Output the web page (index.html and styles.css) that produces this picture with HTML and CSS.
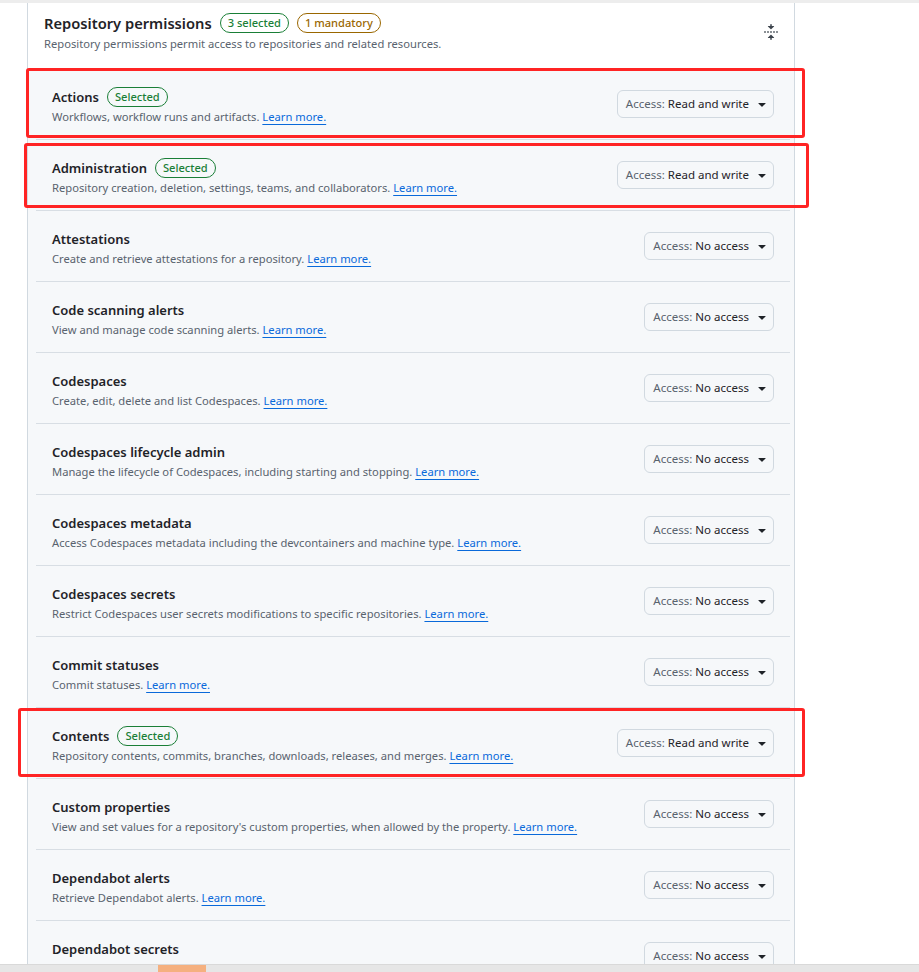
FILE: index.html
```html
<!DOCTYPE html>
<html lang="en">
<head>
<meta charset="utf-8">
<title>Repository permissions</title>
<link rel="stylesheet" href="styles.css">
</head>
<body>
<div class="topstrip"></div>
<div class="panel">
  <div class="panel-header">
    <div class="header-text">
      <div class="header-title">
        <h2>Repository permissions</h2>
        <span class="pill pill-green">3 selected</span>
        <span class="pill pill-gold">1 mandatory</span>
      </div>
      <p class="muted">Repository permissions permit access to repositories and related resources.</p>
    </div>
    <button class="icon-btn" aria-label="Collapse">
      <svg width="16" height="16" viewBox="0 0 16 16" fill="currentColor"><path d="M10.896 2H8.75V.75a.75.75 0 0 0-1.5 0V2H5.104a.25.25 0 0 0-.177.427l2.896 2.896a.25.25 0 0 0 .354 0l2.896-2.896A.25.25 0 0 0 10.896 2ZM8.75 15.25a.75.75 0 0 1-1.5 0V14H5.104a.25.25 0 0 1-.177-.427l2.896-2.896a.25.25 0 0 1 .354 0l2.896 2.896a.25.25 0 0 1-.177.427H8.75v1.25Zm-6.5-6.5a.75.75 0 0 0 0-1.5h-.5a.75.75 0 0 0 0 1.5h.5ZM6 8a.75.75 0 0 1-.75.75h-.5a.75.75 0 0 1 0-1.5h.5A.75.75 0 0 1 6 8Zm2.25.75a.75.75 0 0 0 0-1.5h-.5a.75.75 0 0 0 0 1.5h.5ZM12 8a.75.75 0 0 1-.75.75h-.5a.75.75 0 0 1 0-1.5h.5A.75.75 0 0 1 12 8Zm2.25.75a.75.75 0 0 0 0-1.5h-.5a.75.75 0 0 0 0 1.5h.5Z"/></svg>
    </button>
  </div>

  <div class="perm-area">
    <ul class="perm-list">
      <li class="perm-row">
        <div class="perm-info">
          <div class="perm-title"><strong>Actions</strong><span class="pill pill-green">Selected</span></div>
          <p class="muted">Workflows, workflow runs and artifacts. <a href="#">Learn more.</a></p>
        </div>
        <button class="access-btn"><span class="access-label">Access:</span><span class="access-value">Read and write</span><svg class="caret" width="16" height="16" viewBox="0 0 16 16" fill="currentColor"><path d="m4.427 7.427 3.396 3.396a.25.25 0 0 0 .354 0l3.396-3.396A.25.25 0 0 0 11.396 7H4.604a.25.25 0 0 0-.177.427Z"/></svg></button>
      </li>
      <li class="perm-row">
        <div class="perm-info">
          <div class="perm-title"><strong>Administration</strong><span class="pill pill-green">Selected</span></div>
          <p class="muted">Repository creation, deletion, settings, teams, and collaborators. <a href="#">Learn more.</a></p>
        </div>
        <button class="access-btn"><span class="access-label">Access:</span><span class="access-value">Read and write</span><svg class="caret" width="16" height="16" viewBox="0 0 16 16" fill="currentColor"><path d="m4.427 7.427 3.396 3.396a.25.25 0 0 0 .354 0l3.396-3.396A.25.25 0 0 0 11.396 7H4.604a.25.25 0 0 0-.177.427Z"/></svg></button>
      </li>
      <li class="perm-row">
        <div class="perm-info">
          <div class="perm-title"><strong>Attestations</strong></div>
          <p class="muted">Create and retrieve attestations for a repository. <a href="#">Learn more.</a></p>
        </div>
        <button class="access-btn"><span class="access-label">Access:</span><span class="access-value">No access</span><svg class="caret" width="16" height="16" viewBox="0 0 16 16" fill="currentColor"><path d="m4.427 7.427 3.396 3.396a.25.25 0 0 0 .354 0l3.396-3.396A.25.25 0 0 0 11.396 7H4.604a.25.25 0 0 0-.177.427Z"/></svg></button>
      </li>
      <li class="perm-row">
        <div class="perm-info">
          <div class="perm-title"><strong>Code scanning alerts</strong></div>
          <p class="muted">View and manage code scanning alerts. <a href="#">Learn more.</a></p>
        </div>
        <button class="access-btn"><span class="access-label">Access:</span><span class="access-value">No access</span><svg class="caret" width="16" height="16" viewBox="0 0 16 16" fill="currentColor"><path d="m4.427 7.427 3.396 3.396a.25.25 0 0 0 .354 0l3.396-3.396A.25.25 0 0 0 11.396 7H4.604a.25.25 0 0 0-.177.427Z"/></svg></button>
      </li>
      <li class="perm-row">
        <div class="perm-info">
          <div class="perm-title"><strong>Codespaces</strong></div>
          <p class="muted">Create, edit, delete and list Codespaces. <a href="#">Learn more.</a></p>
        </div>
        <button class="access-btn"><span class="access-label">Access:</span><span class="access-value">No access</span><svg class="caret" width="16" height="16" viewBox="0 0 16 16" fill="currentColor"><path d="m4.427 7.427 3.396 3.396a.25.25 0 0 0 .354 0l3.396-3.396A.25.25 0 0 0 11.396 7H4.604a.25.25 0 0 0-.177.427Z"/></svg></button>
      </li>
      <li class="perm-row">
        <div class="perm-info">
          <div class="perm-title"><strong>Codespaces lifecycle admin</strong></div>
          <p class="muted">Manage the lifecycle of Codespaces, including starting and stopping. <a href="#">Learn more.</a></p>
        </div>
        <button class="access-btn"><span class="access-label">Access:</span><span class="access-value">No access</span><svg class="caret" width="16" height="16" viewBox="0 0 16 16" fill="currentColor"><path d="m4.427 7.427 3.396 3.396a.25.25 0 0 0 .354 0l3.396-3.396A.25.25 0 0 0 11.396 7H4.604a.25.25 0 0 0-.177.427Z"/></svg></button>
      </li>
      <li class="perm-row">
        <div class="perm-info">
          <div class="perm-title"><strong>Codespaces metadata</strong></div>
          <p class="muted">Access Codespaces metadata including the devcontainers and machine type. <a href="#">Learn more.</a></p>
        </div>
        <button class="access-btn"><span class="access-label">Access:</span><span class="access-value">No access</span><svg class="caret" width="16" height="16" viewBox="0 0 16 16" fill="currentColor"><path d="m4.427 7.427 3.396 3.396a.25.25 0 0 0 .354 0l3.396-3.396A.25.25 0 0 0 11.396 7H4.604a.25.25 0 0 0-.177.427Z"/></svg></button>
      </li>
      <li class="perm-row">
        <div class="perm-info">
          <div class="perm-title"><strong>Codespaces secrets</strong></div>
          <p class="muted">Restrict Codespaces user secrets modifications to specific repositories. <a href="#">Learn more.</a></p>
        </div>
        <button class="access-btn"><span class="access-label">Access:</span><span class="access-value">No access</span><svg class="caret" width="16" height="16" viewBox="0 0 16 16" fill="currentColor"><path d="m4.427 7.427 3.396 3.396a.25.25 0 0 0 .354 0l3.396-3.396A.25.25 0 0 0 11.396 7H4.604a.25.25 0 0 0-.177.427Z"/></svg></button>
      </li>
      <li class="perm-row">
        <div class="perm-info">
          <div class="perm-title"><strong>Commit statuses</strong></div>
          <p class="muted">Commit statuses. <a href="#">Learn more.</a></p>
        </div>
        <button class="access-btn"><span class="access-label">Access:</span><span class="access-value">No access</span><svg class="caret" width="16" height="16" viewBox="0 0 16 16" fill="currentColor"><path d="m4.427 7.427 3.396 3.396a.25.25 0 0 0 .354 0l3.396-3.396A.25.25 0 0 0 11.396 7H4.604a.25.25 0 0 0-.177.427Z"/></svg></button>
      </li>
      <li class="perm-row">
        <div class="perm-info">
          <div class="perm-title"><strong>Contents</strong><span class="pill pill-green">Selected</span></div>
          <p class="muted">Repository contents, commits, branches, downloads, releases, and merges. <a href="#">Learn more.</a></p>
        </div>
        <button class="access-btn"><span class="access-label">Access:</span><span class="access-value">Read and write</span><svg class="caret" width="16" height="16" viewBox="0 0 16 16" fill="currentColor"><path d="m4.427 7.427 3.396 3.396a.25.25 0 0 0 .354 0l3.396-3.396A.25.25 0 0 0 11.396 7H4.604a.25.25 0 0 0-.177.427Z"/></svg></button>
      </li>
      <li class="perm-row">
        <div class="perm-info">
          <div class="perm-title"><strong>Custom properties</strong></div>
          <p class="muted">View and set values for a repository's custom properties, when allowed by the property. <a href="#">Learn more.</a></p>
        </div>
        <button class="access-btn"><span class="access-label">Access:</span><span class="access-value">No access</span><svg class="caret" width="16" height="16" viewBox="0 0 16 16" fill="currentColor"><path d="m4.427 7.427 3.396 3.396a.25.25 0 0 0 .354 0l3.396-3.396A.25.25 0 0 0 11.396 7H4.604a.25.25 0 0 0-.177.427Z"/></svg></button>
      </li>
      <li class="perm-row">
        <div class="perm-info">
          <div class="perm-title"><strong>Dependabot alerts</strong></div>
          <p class="muted">Retrieve Dependabot alerts. <a href="#">Learn more.</a></p>
        </div>
        <button class="access-btn"><span class="access-label">Access:</span><span class="access-value">No access</span><svg class="caret" width="16" height="16" viewBox="0 0 16 16" fill="currentColor"><path d="m4.427 7.427 3.396 3.396a.25.25 0 0 0 .354 0l3.396-3.396A.25.25 0 0 0 11.396 7H4.604a.25.25 0 0 0-.177.427Z"/></svg></button>
      </li>
      <li class="perm-row">
        <div class="perm-info">
          <div class="perm-title"><strong>Dependabot secrets</strong></div>
          <p class="muted">Manage Dependabot repository secrets. <a href="#">Learn more.</a></p>
        </div>
        <button class="access-btn"><span class="access-label">Access:</span><span class="access-value">No access</span><svg class="caret" width="16" height="16" viewBox="0 0 16 16" fill="currentColor"><path d="m4.427 7.427 3.396 3.396a.25.25 0 0 0 .354 0l3.396-3.396A.25.25 0 0 0 11.396 7H4.604a.25.25 0 0 0-.177.427Z"/></svg></button>
      </li>
    </ul>
  </div>
</div>

<div class="annot annot-1"></div>
<div class="annot annot-2"></div>
<div class="annot annot-3"></div>

<div class="hscroll"><div class="hscroll-thumb"></div></div>
</body>
</html>
```

FILE: styles.css
```css
html {
  overflow: hidden;
}

body {
  margin: 0;
  background: #ffffff;
  font-family: "Noto Sans", "Liberation Sans", sans-serif;
  color: #1f2328;
}

.topstrip {
  height: 3px;
  background: #ededed;
}

.panel {
  box-sizing: border-box;
  width: 768px;
  margin-left: 27px;
  border-left: 1px solid #d1d9e0;
  border-right: 1px solid #d1d9e0;
  background: #f6f8fa;
}

.panel-header {
  display: flex;
  align-items: center;
  justify-content: space-between;
  padding: 8px 15px 16px 16px;
  background: #ffffff;
}

.header-title {
  display: flex;
  align-items: center;
  gap: 8px;
  height: 24px;
}

.header-title h2 {
  margin: 0;
  font-size: 14.7px;
  font-weight: 600;
  line-height: 24px;
  color: #1f2328;
}

.muted {
  margin: 0;
  font-size: 11.2px;
  line-height: 18px;
  color: #59636e;
}

.muted a {
  color: #0969da;
  text-decoration: underline;
  text-underline-offset: 3px;
}

.pill {
  display: inline-flex;
  align-items: center;
  box-sizing: border-box;
  height: 20px;
  padding: 0 7px;
  border: 1px solid;
  border-radius: 999px;
  font-size: 11.1px;
  font-weight: 500;
  line-height: 18px;
}

.pill-green {
  color: #1a7f37;
  border-color: #1a7f37;
}

.pill-gold {
  color: #9a6700;
  border-color: #9a6700;
}

.icon-btn {
  display: flex;
  align-items: center;
  justify-content: center;
  width: 16px;
  height: 16px;
  padding: 0;
  border: 0;
  background: transparent;
  color: #3d444d;
}

.perm-area {
  background: #f6f8fa;
}

.perm-list {
  list-style: none;
  margin: 0 4px 0 8px;
  padding: 0;
}

.perm-row {
  display: flex;
  align-items: center;
  justify-content: space-between;
  padding: 13px 16px 13px 16px;
  border-bottom: 1px solid #d8dee4;
}

.perm-info {
  padding-top: 4px;
}

.perm-title {
  display: flex;
  align-items: center;
  gap: 8px;
  height: 22px;
}

.perm-title strong {
  font-size: 13px;
  font-weight: 600;
  line-height: 22px;
  color: #1f2328;
}

.access-btn {
  display: inline-flex;
  align-items: center;
  height: 28px;
  box-sizing: border-box;
  padding: 0 3px 0 8px;
  border: 1px solid #d1d9e0;
  border-radius: 6px;
  background: #f6f8fa;
  font-family: "Noto Sans", "Liberation Sans", sans-serif;
  font-size: 11.5px;
  line-height: 18px;
  color: #1f2328;
  white-space: nowrap;
}

.access-label {
  color: #59636e;
}

.access-value {
  margin-left: 3px;
  color: #1f2328;
}

.caret {
  color: #1f2328;
  margin-left: 5px;
}

.annot {
  position: absolute;
  box-sizing: border-box;
  border: 3px solid #ff2424;
  border-radius: 3px;
  pointer-events: none;
}

.annot-1 {
  left: 26px;
  top: 68px;
  width: 779px;
  height: 70px;
}

.annot-2 {
  left: 24px;
  top: 143px;
  width: 785px;
  height: 65px;
}

.annot-3 {
  left: 18px;
  top: 708px;
  width: 787px;
  height: 69px;
}

.hscroll {
  position: fixed;
  left: 0;
  right: 0;
  bottom: 0;
  height: 7px;
  background: #e6e6e6;
  border-top: 1px solid #d9d9d9;
}

.hscroll-thumb {
  width: 48px;
  height: 7px;
  margin-left: 158px;
  background: #f5b07f;
}
```
